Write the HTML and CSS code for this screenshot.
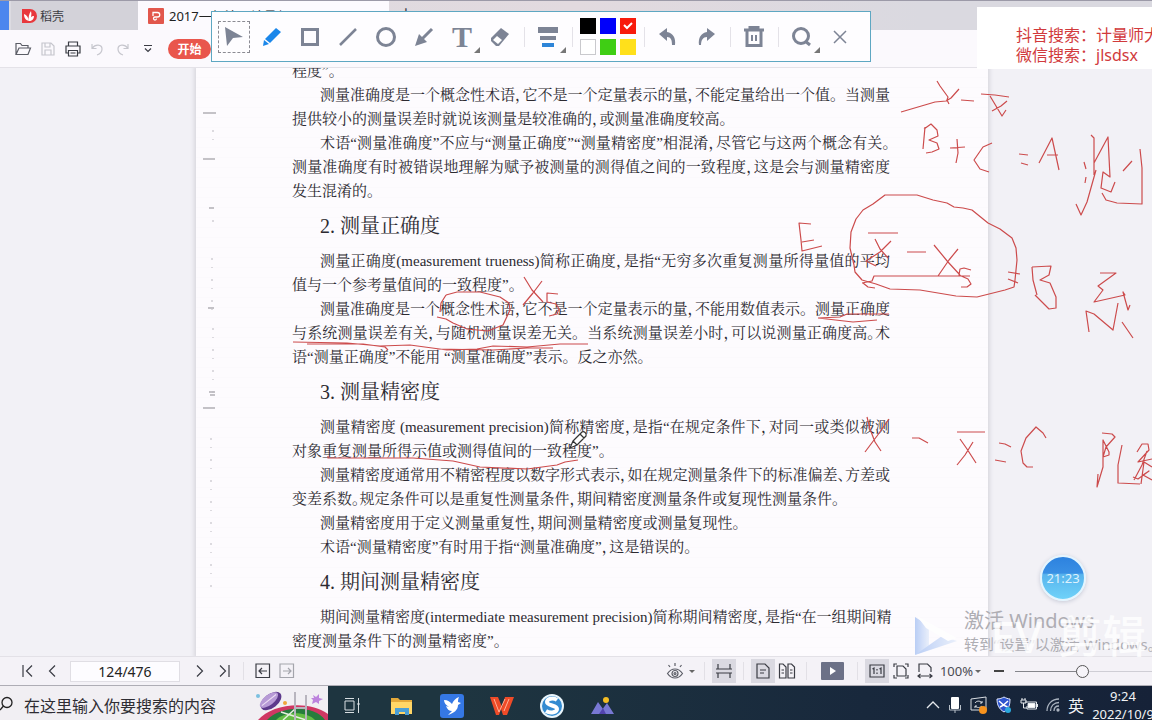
FILE: index.html
```html
<!DOCTYPE html>
<html lang="zh-CN">
<head>
<meta charset="utf-8">
<title>2017一级注册计量师</title>
<link rel="stylesheet" href="styles.css">
</head>
<body>
<header class="tabs">
  <span class="home-tab"></span>
  <button class="tab tab-docer"><svg width="16" height="16" viewBox="0 0 16 16"><path d="M1 1h8a7 7 0 0 1 0 14H1z" fill="#e8383d"/><path d="M8 13C4 12 3 9 3 6c3 1 4 3 5 7zM8 13c-1-4 0-7 2-10 1 4 0 7-2 10zM8 13c1-3 2-5 5-5 0 3-2 5-5 5z" fill="#fff"/></svg>稻壳</button>
  <button class="tab tab-active"><svg width="16" height="16" viewBox="0 0 16 16"><rect width="16" height="16" rx="1" fill="#e2574c"/><path d="M5 8V4.500h4.500a2 2 0 0 1 0 4.500H7a1.500 1.500 0 1 0 1.500 1.500" fill="none" stroke="#fff" stroke-width="1.300"/></svg>2017一级注册计量师</button>
  <button class="tab-add" aria-label="新建">+</button>
</header>
<nav class="ribbon">
  <button aria-label="打开"><svg width="18" height="16" viewBox="0 0 18 16" class="ln"><path d="M2 13V2.500h4.500l1.500 2h6V7M2 13.500 5 7h11.500L14 13.500z"/></svg></button>
  <button aria-label="保存"><svg width="18" height="16" viewBox="0 0 18 16" class="ln pale"><path d="M3 2h9l3 3v9H3zM6 2v4h5V2M6 14V9h6v5"/></svg></button>
  <button aria-label="打印"><svg width="18" height="18" viewBox="0 0 18 18" class="ln dark"><path d="M4.500 6V2h9v4M4 13H2V6h14v7h-2M4.500 10.500h9V16h-9zM6.500 13h5"/></svg></button>
  <button aria-label="撤销"><svg width="18" height="16" viewBox="0 0 18 16" class="ln pale"><path d="M3 3v4.500h4.500M3.500 7C6 3 13 3 13 8c0 3-2 5-5 6"/></svg></button>
  <button aria-label="恢复"><svg width="18" height="16" viewBox="0 0 18 16" class="ln pale"><path d="M14 3v4.500H9.500M13.500 7C11 3 4 3 4 8c0 3 2 5 5 6"/></svg></button>
  <button aria-label="更多"><svg width="10" height="10" viewBox="0 0 10 10" class="ln dark"><path d="M1 1.500h8M2 4.500l3 3 3-3"/></svg></button>
  <button class="start">开始</button>
</nav>

<main class="viewer">
  <article class="page">
    <svg class="specks" width="24" height="588" viewBox="0 0 24 588"><path d="M7 45h13M7 91h12M13 140h5M12 240h6M7 340h12M13 324h6M14 327h5"/><path class="dots" d="M17 62v20M17 152v8M16 190v60M17 260v70M15 370v150"/></svg>
    <div class="copy">
      <p><span>程度”。</span></p>
      <p class="in"><span class="full">测量准确度是一个概念性术语，它不是一个定量表示的量，不能定量给出一个值<i>。</i>当测量</span>
      <span>提供较小的测量误差时就说该测量是较准确的，或测量准确度较高。</span></p>
      <p class="in"><span class="full">术语“测量准确度”不应与“测量正确度”“测量精密度”相混淆，尽管它与这两个概念有关。</span>
      <span class="full">测量准确度有时被错误地理解为赋予被测量的测得值之间的一致程度，这是会与测量精密度</span>
      <span>发生混淆的。</span></p>
      <h2>2. 测量正确度</h2>
      <p class="in"><span class="full">测量正确度(measurement trueness)简称正确度，是指“无穷多次重复测量所得量值的平均</span>
      <span>值与一个参考量值间的一致程度”。</span></p>
      <p class="in"><span class="full">测量准确度是一个概念性术语，它不是一个定量表示的量，不能用数值表示<i>。</i>测量正确度</span>
      <span class="full">与系统测量误差有关，与随机测量误差无关<i>。</i>当系统测量误差小时，可以说测量正确度高。术</span>
      <span>语“测量正确度”不能用 “测量准确度”表示<i>。</i>反之亦然。</span></p>
      <h2>3. 测量精密度</h2>
      <p class="in"><span class="full">测量精密度 (measurement precision)简称精密度，是指“在规定条件下，对同一或类似被测</span>
      <span>对象重复测量所得示值或测得值间的一致程度”。</span></p>
      <p class="in"><span class="full">测量精密度通常用不精密程度以数字形式表示，如在规定测量条件下的标准偏差、方差或</span>
      <span>变差系数。规定条件可以是重复性测量条件，期间精密度测量条件或复现性测量条件。</span></p>
      <p class="in"><span>测量精密度用于定义测量重复性，期间测量精密度或测量复现性。</span></p>
      <p class="in"><span>术语“测量精密度”有时用于指“测量准确度”，这是错误的。</span></p>
      <h2>4. 期间测量精密度</h2>
      <p class="in"><span class="full">期间测量精密度(intermediate measurement precision)简称期间精密度，是指“在一组期间精</span>
      <span>密度测量条件下的测量精密度”。</span></p>
      <p class="in"><span>期间测量精密度是一个概念性术语，它不是一个定量</span></p>
    </div>
  </article>
</main>

<footer class="status">
  <div class="pager">
    <button aria-label="首页"><svg width="14" height="14" viewBox="0 0 14 14" class="ln dark"><path d="M2 1v12M11 1.500 5.500 7l5.500 5.500"/></svg></button>
    <button aria-label="上一页"><svg width="14" height="14" viewBox="0 0 14 14" class="ln dark"><path d="M10 1.500 4.500 7l5.500 5.500"/></svg></button>
    <input type="text" value="124/476" aria-label="页码">
    <button aria-label="下一页"><svg width="14" height="14" viewBox="0 0 14 14" class="ln dark"><path d="M4 1.500 9.500 7 4 12.500"/></svg></button>
    <button aria-label="末页"><svg width="14" height="14" viewBox="0 0 14 14" class="ln dark"><path d="M12 1v12M3 1.500 8.500 7 3 12.500"/></svg></button>
    <span class="sep"></span>
    <button aria-label="后退"><svg width="16" height="16" viewBox="0 0 16 16" class="ln dark"><path d="M1 1h13.500v13.500H1zM12 8H4M7 5 4 8l3 3"/></svg></button>
    <button aria-label="前进"><svg width="16" height="16" viewBox="0 0 16 16" class="ln mute"><path d="M1 1h13.500v13.500H1zM4 8h8M9 5l3 3-3 3"/></svg></button>
  </div>
  <div class="views">
    <button aria-label="护眼"><svg width="18" height="18" viewBox="0 0 18 18" class="ln"><path d="M1.500 11.500c4-6 11-6 15 0-4 6-11 6-15 0zM9 1v3M2.500 3l1.500 2M15.500 3 14 5"/><circle cx="9" cy="11.500" r="3"/><circle cx="9" cy="11.500" r="1"/></svg></button>
    <span class="caret"></span><span class="sep"></span>
    <button class="on" aria-label="连续"><svg width="18" height="18" viewBox="0 0 18 18" class="ln dark"><path d="M3 2v5h12V2M3 16v-5h12v5M1 7h16M1 11h16"/></svg></button>
    <span class="sep"></span>
    <button class="on" aria-label="单页"><svg width="16" height="18" viewBox="0 0 16 18" class="ln dark"><path d="M2 2h8l4 4v10H2zM5 8h6M5 11h4"/></svg></button>
    <button aria-label="双页"><svg width="18" height="18" viewBox="0 0 18 18" class="ln dark"><path d="M1.500 2H5l3 3v11H1.500zM10 2h3.500L16.500 5v11H10zM3.500 8H6M3.500 11H6M12 8h2.500M12 11h2.500"/></svg></button>
    <span class="sep"></span>
    <button class="play" aria-label="播放"><svg width="23" height="18" viewBox="0 0 23 18"><rect width="23" height="18" rx="1" fill="#6c7187"/><path d="M9 5v8l6-4z" fill="#fff"/></svg></button>
    <span class="sep"></span>
    <button class="on" aria-label="实际大小"><svg width="18" height="16" viewBox="0 0 18 16" class="ln dark"><path d="M2 2h14v12H2zM4.500 6 6 5v6M11.500 6 13 5v6M9 6v1.500M9 9.500V11"/></svg></button>
    <button aria-label="适合页面"><svg width="16" height="16" viewBox="0 0 16 16" class="ln dark"><path d="M4 3h6l3 3v7H4zM1 4V1h3M12 1h3v3M15 12v3h-3M4 15H1v-3"/></svg></button>
    <button aria-label="适合宽度"><svg width="16" height="16" viewBox="0 0 16 16" class="ln dark"><path d="M2 9V1h8.500L14 4.500V9M1 13h14M3.500 11 1 13l2.500 2M12.500 11l2.500 2-2.500 2"/></svg></button>
    <output class="pct">100%</output><span class="caret"></span>
    <button class="minus" aria-label="缩小"><svg width="12" height="4" viewBox="0 0 12 4"><path d="M1 2h10" stroke="#444" stroke-width="2"/></svg></button>
    <input type="range" min="0" max="100" value="49" aria-label="缩放">
  </div>
</footer>

<footer class="taskbar">
  <label class="search">
    <svg width="14" height="16" viewBox="0 0 14 16"><circle cx="7" cy="6.500" r="5" fill="none" stroke="#222" stroke-width="1.300"/><path d="M3.500 10 0 14" stroke="#222" stroke-width="1.300"/></svg>
    <input type="search" placeholder="在这里输入你要搜索的内容" aria-label="搜索">
    <svg width="72" height="34" viewBox="0 0 72 34"><circle cx="2" cy="10" r="2" fill="#7bc0e0"/><circle cx="29" cy="17" r="2" fill="#f0a53c"/><g transform="rotate(-38 15 15)"><ellipse cx="15" cy="15" rx="12" ry="7" fill="#5d3a8c"/><ellipse cx="14" cy="13" rx="11" ry="5" fill="#b79ad6"/><path d="M5 13h18" stroke="#eee0f5"/></g><path d="M2 34C16 17 54 14 72 28v6z" fill="#cf3763"/><path d="M11 34c12-14 47-16 58 0z" fill="#267d3c"/><path d="M20 34c8-9 31-9 39 0z" fill="#65bd45"/><path d="m25 26 25 8M39 23l-12 11" stroke="#e6f0df" stroke-width="1.500"/><path d="M39 6v28M50 9v25M39 22h11" stroke="#b8b5be" stroke-width="2"/><path d="m57 9 3 2 3-3v4l4 1-4 2v3l-3-2-4 2 1-4-2-2h3z" fill="#bd83dd"/></svg>
  </label>
  <div class="apps">
    <button aria-label="任务视图"><svg width="20" height="20" viewBox="0 0 20 20" fill="none" stroke="#d8dfe2"><path d="M3 5h9v9H3zM3 2.500h9M3 16.500h9M16.500 2v15"/><path d="M15.500 8h2" stroke-width="2"/></svg></button>
    <button aria-label="文件资源管理器"><svg width="24" height="24" viewBox="0 0 24 24"><path d="M1 4h7l2 2h12v14H1z" fill="#e4a93a"/><path d="M1 8h21v12H1z" fill="#ffd667"/><path d="M5 21v-7h14v7h-4v-3H9v3z" fill="#4b9fd5"/></svg></button>
    <button aria-label="飞鸟"><svg width="24" height="24" viewBox="0 0 24 24"><rect width="24" height="24" rx="3" fill="#3578e5"/><path d="M4 6c4 0 6 2 8 4 1-3 4-6 7-7-1 2-1 4-1 5l3 1-3 2c0 5-4 8-10 10l4-4c-3 0-5-2-6-5l3 1C6 11 4 9 4 6z" fill="#fff"/></svg></button>
    <button aria-label="WPS"><svg width="26" height="20" viewBox="0 0 26 20"><path d="M1 1h8l4 10 3-10h9l-7 18h-4l-2-6-2 6H7z" fill="#ef4b28"/><path d="m5 3 5 13M10 16l6-13M15 15l5-12" fill="none" stroke="#ffb198" stroke-width="1"/></svg></button>
    <button aria-label="搜狗"><svg width="24" height="24" viewBox="0 0 24 24"><circle cx="12" cy="12" r="12" fill="#e9f5fb"/><circle cx="12" cy="12" r="10" fill="#338bd1"/><path d="M17 6c-4-3-10-1-10 2 0 4 10 3 10 7 0 3-6 5-11 2" fill="none" stroke="#fff" stroke-width="4"/></svg></button>
    <button aria-label="剪辑"><svg width="24" height="20" viewBox="0 0 24 20"><path d="M1 18 8 6l5 7-3 5zM9 18l8-11 7 11z" fill="#7878d4"/><path d="m9 18 4-6 3 6z" fill="#5143ae"/><circle cx="16" cy="4" r="3" fill="#f4bd24"/></svg></button>
  </div>
  <div class="tray">
    <svg width="14" height="10" viewBox="0 0 14 10" fill="none" stroke="#e5e9ed" stroke-width="1.300"><path d="m1 8 6-6 6 6"/></svg>
    <svg width="14" height="18" viewBox="0 0 14 18"><rect x="3" y="1" width="8" height="12" rx="1" fill="#fff"/><path d="M1.500 9v5h11V9M7 14v3" fill="none" stroke="#b8c0c9"/></svg>
    <svg width="18" height="18" viewBox="0 0 18 18" fill="none" stroke="#d9dde2"><path d="M1 3l15-2v13H1zM5 7c2-3 6-2 7 0M12 5v2h-2M12 10c-2 2-5 2-7 0M5 12v-2h2"/><circle cx="13" cy="14" r="4" fill="#f7931e" stroke="none"/></svg>
    <svg width="16" height="18" viewBox="0 0 16 18"><path d="M1 3c3 0 5-1 7-2 2 1 4 2 6 2 0 6-1 10-6 13C3 13 1 9 1 3z" fill="#2d55cf" stroke="#dfe6ff"/><path d="m3 5 4.500 4L12 5M4 11l3.500-2 4 2" fill="none" stroke="#fff" stroke-width="1.500"/><circle cx="12" cy="14" r="3" fill="#2aa8dc"/></svg>
    <svg width="18" height="14" viewBox="0 0 18 14" fill="none" stroke="#e5e9ed"><path d="M5 4h11.500v7H7V8M17.500 6v3M1 2h5v3H1zM2 0v2M5 0v2M3.500 5v5H7"/><path d="M8 5.500h7v4H8z" fill="#fff"/></svg>
    <svg width="14" height="14" viewBox="0 0 14 14" fill="none" stroke="#aab3bf" stroke-width="1.300"><path d="M1 13C1 6 6 1 13 1M4.500 13C4.500 8 8 4.500 13 4.500M8 13c0-3 2-5 5-5"/><circle cx="12" cy="12" r="1" fill="#fff"/></svg>
    <span class="ime">英</span>
    <time class="clock">9:24<br>2022/10/9</time>
  </div>
</footer>

<aside class="promo">抖音搜索：计量师大<br>微信搜索：jlsdsx</aside>

<div class="activate"><b>激活 Windows</b>转到“设置”以激活 Windows。</div>
<div class="brand"><svg width="44" height="40" viewBox="0 0 44 40"><defs><linearGradient id="bl" x1="0" x2="1"><stop offset="0" stop-color="#a9c3f4"/><stop offset="1" stop-color="#e6edfb"/></linearGradient></defs><path d="M1 1v38l14-8V10z" fill="url(#bl)"/><path d="M1 39 28 20l15 5z" fill="url(#bl)"/><path d="m3 0 40 22-9 3L12 12z" fill="#fff"/></svg><span>EV</span><span>剪辑</span></div>
<time class="timer">21:23</time>

<svg class="ink" width="1152" height="720" viewBox="0 0 1152 720" aria-hidden="true">
  <path d="M937 81 940 86 948 97 947 100 949 104M959 89 951 98 946 101 935 102 901 112M961 100 974 101M981 94 995 95 1009 97M990 96 1002 116 1006 110M1007 101 1001 106 992 111"/>
  <path d="M925 127 923 149M924 129 931 124 937 130 938 136 929 140 937 143 939 149 932 152 926 153M950 148 965 147M957 139 958 153 956 163M992 143 983 147 974 160 980 169 989 172M1019 154 1028 155M1021 163 1028 165M1039 163 1052 138 1059 170M1047 155 1058 155"/>
  <path d="M1084 162 1086 169M1086 177 1085 183M1091 135 1094 138 1094 175M1094 163 1108 137 1110 177 1103 172 1101 188 1111 192 1115 182M1096 170 1087 202 1081 215 1076 204M1123 171 1132 161M1140 149 1142 168 1142 204 1117 203 1106 200 1102 193"/>
  <path d="M885 195 917 195 933 200 947 203 954 207 963 208 972 210 988 223 1000 229 1012 238 1016 248 1017 260 1015 280 1014 287 1005 290 977 297 956 296 920 290 890 289 876 284 862 280 855 272 854 265 850 248 851 232 856 219 863 210 873 204z"/>
  <path d="M811 224 799 223 801 240 802 251 822 246M802 242 814 240M868 233 898 233M875 239 880 249 888 258M891 241 880 252 866 261 876 266M907 252 926 252M934 245 948 262 960 275M958 249 949 260 938 276M971 270 964 268 960 269 959 275 968 279 971 284 967 287 961 287M862 283 872 281 874 276 970 276M863 283 868 287 875 288M1008 272 1020 274M1008 279 1018 283"/>
  <path d="M1032 267 1033 280 1037 295M1032 267 1051 266 1049 275 1040 280 1050 283 1056 297 1056 308 1049 309 1035 295M1100 273 1116 273 1098 286 1103 290 1094 302 1125 295 1123 292 1128 310 1130 305M1089 332 1086 311 1094 314 1113 330 1118 303M1122 322 1133 338"/>
  <path d="M818 318 840 317 847 314 889 314M818 318 853 322 877 320M446 295 457 292 480 292 500 297 509 303 510 310 503 325 488 331 467 329 453 323 446 319 437 317M446 295 441 303 440 312M524 277 532 290 543 302M542 281 533 293 523 305M558 294 547 293 547 302 556 304 559 309 557 314 549 316"/>
  <path d="M293 342 347 343 380 346 410 345 447 350 477 349 493 346 527 347 560 344 588 344M307 344 363 344 385 347 388 350M437 349 493 350 527 348 553 348M328 456 328 458 413 458 453 461 480 467 527 469 557 465 565 462 578 460"/>
  <path d="M867 417 870 429 875 442 881 451M889 419 877 436 865 452M912 438 919 438 928 443M957 432 985 432M960 439 967 449 976 463M973 442 965 455 957 465M999 443 1005 444 1011 447M995 460 1006 462M1046 438 1043 433 1036 427 1026 438 1021 451 1023 463 1027 467 1033 467"/>
  <path d="M1102 433 1112 434 1115 437 1106 447 1103 457 1109 455 1109 452 1103 440 1103 467 1097 487 1098 474M1122 445 1118 465 1118 483 1140 484M1137 452 1142 444 1148 444 1149 450 1138 462 1152 459M1134 480 1142 465 1147 451M1141 484 1144 462 1152 467M1133 477 1138 479 1149 471 1143 475 1152 480"/>
  <path class="pen" d="m570 448 3-7 9-9c2-1 5 1 4 4l-9 9zM573 441l4 4M580 434l4 4"/>
</svg>

<div class="tools" role="toolbar" aria-label="批注">
  <button class="picked" aria-label="选择"><svg width="20" height="22" viewBox="0 0 20 22"><path d="M1 1 19 11 9 12 3 20z" fill="#7d8495"/></svg></button>
  <button aria-label="画笔"><svg width="20" height="20" viewBox="0 0 20 20"><path d="m14 1 5 4L8 16l-5-4z" fill="#1b87ea"/><path d="m2 13 5 4-6 2z" fill="#1b87ea"/></svg></button>
  <button aria-label="矩形"><svg width="20" height="20" viewBox="0 0 20 20" class="tk"><path d="M2.500 2.500h15v15h-15z"/></svg></button>
  <button aria-label="直线"><svg width="20" height="20" viewBox="0 0 20 20" class="tk thin"><path d="M2 18 18 2"/></svg></button>
  <button aria-label="椭圆"><svg width="22" height="22" viewBox="0 0 22 22" class="tk"><circle cx="11" cy="11" r="8.500"/></svg></button>
  <button aria-label="箭头"><svg width="20" height="20" viewBox="0 0 20 20"><path d="M18 2 8 12" stroke="#7d8495" stroke-width="3"/><path d="m1 19 4-12 8 8z" fill="#7d8495"/></svg></button>
  <button class="more type" aria-label="文字">T</button>
  <button aria-label="橡皮"><svg width="22" height="20" viewBox="0 0 22 20"><path d="m12 1 8 6-10 12H7l-5-5v-3z" fill="#7d8495"/><path d="m8 9 5 4-4 4-5-4z" fill="#fff"/></svg></button>
  <span class="bar"></span>
  <button class="more" aria-label="线宽"><svg width="20" height="22" viewBox="0 0 20 22"><path d="M0 1h20v6H0zM2 10h16v4H2z" fill="#7d8495"/><path d="M4 17h12v4H4z" fill="#2e85d8"/></svg></button>
  <span class="bar"></span>
  <div class="colors">
    <button class="black" aria-label="黑"></button><button class="blue" aria-label="蓝"></button><button class="red" aria-label="红"><svg width="12" height="10" viewBox="0 0 12 10"><path d="m2 4 3 3 5-5" fill="none" stroke="#fff" stroke-width="2"/></svg></button>
    <button class="white" aria-label="白"></button><button class="green" aria-label="绿"></button><button class="yellow" aria-label="黄"></button>
  </div>
  <span class="bar"></span>
  <button aria-label="撤销"><svg width="20" height="20" viewBox="0 0 20 20"><path d="M1 7 9 1v4c6 1 9 6 8 13h-3c0-5-1-8-5-8v4z" fill="#7d8495"/></svg></button>
  <button aria-label="重做"><svg width="20" height="20" viewBox="0 0 20 20"><path d="m19 7-8-6v4C5 6 2 11 3 18h2c0-5 2-8 6-8v4z" fill="#7d8495"/></svg></button>
  <span class="bar"></span>
  <button aria-label="清空"><svg width="20" height="22" viewBox="0 0 20 22" class="tk"><path d="M0 4h20M6 3V1.500h8V3M3 5v14.500h14V5"/><path d="M8 9v6M12 9v6" stroke-width="2"/></svg></button>
  <span class="bar"></span>
  <button class="more" aria-label="缩放"><svg width="22" height="20" viewBox="0 0 22 20" class="tk"><circle cx="10" cy="9" r="7.500"/><path d="m14 14 5 4"/></svg></button>
  <button aria-label="关闭"><svg width="14" height="14" viewBox="0 0 14 14"><path d="m1 1 12 12M13 1 1 13" stroke="#7d8495" stroke-width="1.500"/></svg></button>
</div>
</body>
</html>
```
FILE: styles.css
```css
* { box-sizing: border-box; }
body { margin: 0; height: 100vh; display: flex; flex-direction: column; overflow: hidden; position: relative; background: #f2f1f6; font-family: "Noto Sans", "Noto Sans CJK SC", sans-serif; }
button { border: 0; padding: 0; background: none; font: inherit; color: inherit; display: flex; align-items: center; justify-content: center; flex: none; }
svg { flex: none; display: block; }
.ln { fill: none; stroke: #5b5d66; stroke-width: 1.2; }
.ln.dark { stroke: #3a3c44; }
.ln.pale { stroke: #c6c6cd; }
.ln.mute { stroke: #a4a5ac; }

.tabs { height: 30px; flex: none; display: flex; border-top: 1px solid #9c9aa8; background: linear-gradient(90deg, #dcdbe1 0, #e2dadf 50%, #dad9e0 80%); font-size: 12px; color: #3c3d44; overflow: hidden; }
.home-tab { width: 9px; background: #4c86ee; flex: none; margin-right: 2px; }
.tab { justify-content: flex-start; gap: 3px; }
.tab-docer { width: 127px; padding-left: 10px; background: #d3d2d9; }
.tab-active { width: 251px; padding-left: 10px; gap: 5px; background: #fcfafe; font-size: 13px; color: #222; }
.tab-add { width: 34px; height: 22px; font-size: 18px; }

.ribbon { height: 38px; flex: none; display: flex; align-items: center; padding-left: 14px; gap: 7px; background: #fbf9fd; border-bottom: 1px solid #e4e2e8; }
.ribbon button { width: 18px; }
.ribbon .start { width: 43px; height: 20px; margin-left: 4px; border-radius: 10px; background: #e9564c; color: #fff; font-size: 12px; font-weight: 700; }

.viewer { flex: 1; min-height: 0; overflow: hidden; display: flex; padding: 0 164px 0 196px; }
.page { flex: 1; min-width: 0; display: flex; overflow: hidden; background: repeating-linear-gradient(#fdfbfe 0, #fdfbfe 9px, #f9f7fb 10px); box-shadow: 0 0 4px 2px #d9d8df; padding-right: 98px; }
.specks { stroke: #8b8990; stroke-width: 1; }
.specks .dots { stroke: #bbb9c0; stroke-dasharray: 2 7 1 11; }
.copy { flex: 1; min-width: 0; margin: -9px 0 0 72px; font-family: "Liberation Serif", "Noto Serif CJK SC", "Noto Sans CJK SC", serif; font-size: 15px; line-height: 24px; color: #2c2a31; font-feature-settings: "halt"; }
.copy p { margin: 0; }
.copy span { display: block; white-space: nowrap; }
.copy i { font-style: normal; font-feature-settings: normal; }
.copy .in span:first-child { padding-left: 28px; }
.copy .full { text-align: justify; text-align-last: justify; }
.copy h2 { margin: 0; padding-left: 28px; font-size: 20px; font-weight: 400; line-height: 46px; }

.status { height: 30px; flex: none; display: flex; align-items: center; background: #f4f2f7; border-top: 1px solid #e3e1e7; border-bottom: 1px solid #aeadb5; }
.pager, .views { display: flex; align-items: center; }
.pager { padding-left: 16px; }
.pager button { width: 24px; }
.pager input { width: 110px; height: 21px; margin: 0 8px 0 6px; padding: 0; border: 1px solid #e0dee4; background: #fdfcff; text-align: center; font: 14px "Noto Sans", sans-serif; color: #222; }
.sep { width: 1px; height: 18px; margin: 0 7px; background: #e2e0e6; flex: none; }
.views { margin-left: auto; }
.views button { width: 24px; height: 24px; }
.views .on { background: #dad9e1; }
.views .play { margin: 0 6px; }
.caret { width: 6px; border: 3px solid transparent; border-top-color: #666; margin: 3px 2px 0 2px; }
.pct { width: 36px; font-size: 13px; color: #4a4b52; text-align: right; }
.views .minus { width: 12px; margin: 0 10px; }
.views input { width: 137px; height: 16px; margin: 0; appearance: none; background: linear-gradient(#85868c, #85868c) 0 50% / 50% 1px no-repeat, linear-gradient(#cfced5, #cfced5) 0 50% / 100% 1px no-repeat; }
.views input::-webkit-slider-thumb { appearance: none; width: 13px; height: 13px; border: 1px solid #555; border-radius: 50%; background: #f6f4f9; }

.taskbar { height: 34px; flex: none; display: flex; align-items: center; overflow: hidden; background: linear-gradient(90deg, #1e3540 40%, #18283c 75%, #162238); }
.search { width: 328px; height: 34px; flex: none; display: flex; align-items: center; background: #f1eff3; }
.search input { flex: 1; min-width: 0; height: 34px; margin: 4px 0 0; padding: 0 0 0 10px; border: 0; background: none; font: 16px "Noto Sans CJK SC", sans-serif; }
.search input::placeholder { color: #2e2d33; }
.search > svg:first-child { margin-top: 2px; }
.apps { display: flex; align-items: center; padding: 6px 0 0; margin-left: -1px; }
.apps button { width: 50px; height: 24px; }
.tray { margin-left: auto; display: flex; align-items: center; gap: 8px; color: #f1f3f5; padding-top: 3px; }
.ime { font: 16px/20px "Noto Sans CJK SC", sans-serif; }
.clock { font-size: 13px; line-height: 18px; text-align: center; width: 62px; margin-right: -2px; white-space: nowrap; }

.promo { position: absolute; top: 7px; right: 0; width: 175px; height: 62px; padding: 18px 0 0 39px; overflow: hidden; white-space: nowrap; background: #fff; color: #d13a3c; font-size: 16px; line-height: 20px; }
.activate { position: absolute; right: 0; bottom: 66px; width: 188px; white-space: nowrap; overflow: hidden; color: #aeadb3; font-size: 15px; line-height: 20px; }
.activate b { display: block; font-size: 20px; line-height: 26px; font-weight: 400; }
.brand { position: absolute; right: 6px; bottom: 64px; height: 40px; display: flex; align-items: center; gap: 16px; opacity: .8; color: #fff; font-size: 44px; line-height: 40px; font-weight: 500; white-space: nowrap; }
.brand svg { margin-right: 16px; }
.timer { position: absolute; right: 66px; bottom: 119px; width: 46px; height: 46px; border: 2px solid #e4f5fe; border-radius: 50%; background: linear-gradient(#2d82df 0, #398fe4 38%, #58b4ed 42%, #6fd2f9); box-shadow: 0 1px 4px #c5c8d5; color: #dff2fd; font-size: 13px; line-height: 42px; text-align: center; }
.ink { position: absolute; top: 0; left: 0; fill: none; stroke: #cc4b4c; stroke-width: 1.2; stroke-linejoin: round; pointer-events: none; }
.pen { fill: #fff; stroke: #333; }

.tools { position: absolute; top: 11px; left: 211px; width: 660px; height: 51px; display: flex; align-items: center; padding: 0 12px 0 6px; background: #fefdff; border: 1px solid #5ea7c2; }
.tools > button { width: 32px; height: 32px; margin-right: 6px; position: relative; }
.tools .picked { border: 1px dashed #8b8b93; }
.tools .type { font: 700 30px "Liberation Serif", serif; color: #7d8495; }
.tools .more::after { content: ""; position: absolute; right: -2px; bottom: 0; border: 3px solid transparent; border-right-color: #777; border-bottom-color: #777; }
.tk { fill: none; stroke: #7d8495; stroke-width: 3; }
.tk.thin { stroke-width: 2.5; }
.bar { width: 1px; height: 20px; background: #e4e2e8; margin: 0 7px 0 2px; flex: none; }
.colors { display: grid; grid-template-columns: repeat(3, 16px); gap: 5px 4px; margin-right: 6px; }
.colors button { height: 16px; }
.black { background: #000; }
.blue { background: #0000fa; }
.red { background: #f81b0c; }
.colors .white { background: #fff; border: 1px solid #c9c9cd; }
.green { background: #3fce14; }
.yellow { background: #ffe01b; }
```
